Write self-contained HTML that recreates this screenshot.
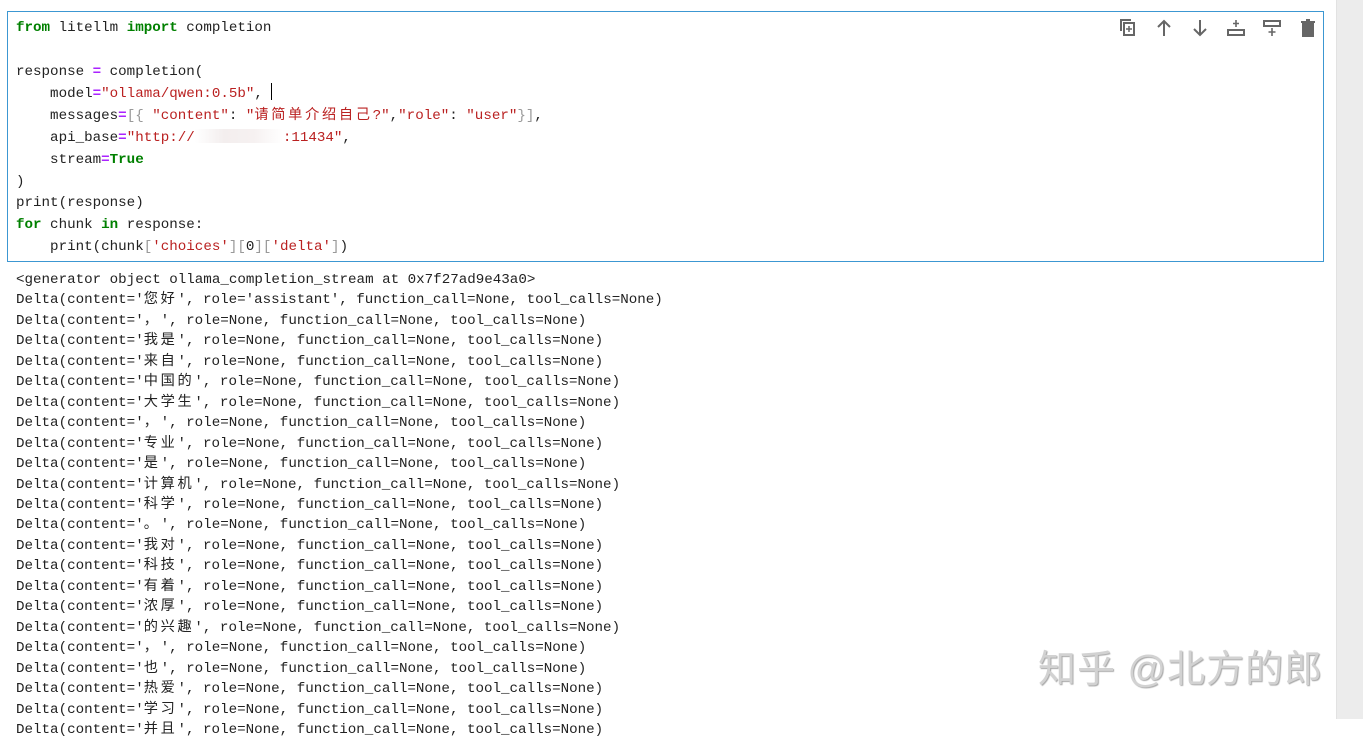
<!DOCTYPE html>
<html><head><meta charset="utf-8"><style>
body{margin:0;width:1363px;height:719px;overflow:hidden;background:#fff;position:relative;font-family:"Liberation Mono","Noto Sans CJK SC",monospace;}
.sb{position:absolute;left:1336px;top:0;width:27px;height:719px;background:#ececec;border-left:1px solid #e2e2e2}
.cell{position:absolute;left:7px;top:11px;width:1315px;height:249px;border:1px solid #3c97d2;}
.code{position:absolute;left:16px;top:18px;font-size:14.2px;line-height:21.8px;color:#222;white-space:pre;}
.k{color:#008000;font-weight:bold}.s{color:#ba2121}.o{color:#aa22ff;font-weight:bold}.b{color:#999}
.out{position:absolute;left:16px;top:270px;font-size:14.2px;line-height:20.45px;color:#222;white-space:pre;}
.c{letter-spacing:2.7px}
.cur{display:inline-block;width:1px;height:17px;background:#000;vertical-align:-3px}
.blur{display:inline-block;width:88px;height:14px;background:linear-gradient(90deg,#fff,#f3eeee,#f6f1f1,#fff);vertical-align:-2px}
.ic{position:absolute;top:18px}
.wm{position:absolute;left:1038px;top:638px;font-family:"Liberation Sans","Noto Sans CJK SC",sans-serif;font-size:38px;font-weight:normal;color:#d2d2d2;text-shadow:1px 1px 1px #a8a8a8;letter-spacing:1px}
</style></head><body>
<div class="sb"></div>
<div class="cell"></div>
<div class="code"><span class="k">from</span> litellm <span class="k">import</span> completion

response <span class="o">=</span> completion(
    model<span class="o">=</span><span class="s">"ollama/qwen:0.5b"</span>, <span class="cur"></span>
    messages<span class="o">=</span><span class="b">[{</span> <span class="s">"content"</span>: <span class="s">"<span class="c">请简单介绍自己</span>?"</span>,<span class="s">"role"</span>: <span class="s">"user"</span><span class="b">}]</span>,
    api_base<span class="o">=</span><span class="s">"http://<span class="blur"></span>:11434"</span>,
    stream<span class="o">=</span><span class="k">True</span>
)
print(response)
<span class="k">for</span> chunk <span class="k">in</span> response:
    print(chunk<span class="b">[</span><span class="s">'choices'</span><span class="b">][</span>0<span class="b">][</span><span class="s">'delta'</span><span class="b">]</span>)</div>
<svg class="ic" width="220" height="20" style="left:1118px" viewBox="0 0 220 20" fill="none" stroke="#666" stroke-width="2">
<rect x="6" y="5" width="10" height="12"/><path d="M3 13V2h10"/><path d="M11 8v6M8 11h6" stroke-width="1.5"/>
<path d="M46 18V3M40 9l6-6 6 6"/>
<path d="M82 2v15M76 11l6 6 6-6"/>
<path d="M110 12h16v5h-16z"/><path d="M118 2v7M115 5.5h6" stroke-width="1.6"/>
<path d="M146 3h16v5h-16z"/><path d="M154 10v8M150.5 14h7" stroke-width="1.6"/>
<path d="M185 6h10v12h-10z" fill="#666"/><path d="M183 4h14M188 2h4"/>
</svg>
<div class="out">&lt;generator object ollama_completion_stream at 0x7f27ad9e43a0&gt;
Delta(content='<span class="c">您好</span>', role='assistant', function_call=None, tool_calls=None)
Delta(content='<span class="c">，</span>', role=None, function_call=None, tool_calls=None)
Delta(content='<span class="c">我是</span>', role=None, function_call=None, tool_calls=None)
Delta(content='<span class="c">来自</span>', role=None, function_call=None, tool_calls=None)
Delta(content='<span class="c">中国的</span>', role=None, function_call=None, tool_calls=None)
Delta(content='<span class="c">大学生</span>', role=None, function_call=None, tool_calls=None)
Delta(content='<span class="c">，</span>', role=None, function_call=None, tool_calls=None)
Delta(content='<span class="c">专业</span>', role=None, function_call=None, tool_calls=None)
Delta(content='<span class="c">是</span>', role=None, function_call=None, tool_calls=None)
Delta(content='<span class="c">计算机</span>', role=None, function_call=None, tool_calls=None)
Delta(content='<span class="c">科学</span>', role=None, function_call=None, tool_calls=None)
Delta(content='<span class="c">。</span>', role=None, function_call=None, tool_calls=None)
Delta(content='<span class="c">我对</span>', role=None, function_call=None, tool_calls=None)
Delta(content='<span class="c">科技</span>', role=None, function_call=None, tool_calls=None)
Delta(content='<span class="c">有着</span>', role=None, function_call=None, tool_calls=None)
Delta(content='<span class="c">浓厚</span>', role=None, function_call=None, tool_calls=None)
Delta(content='<span class="c">的兴趣</span>', role=None, function_call=None, tool_calls=None)
Delta(content='<span class="c">，</span>', role=None, function_call=None, tool_calls=None)
Delta(content='<span class="c">也</span>', role=None, function_call=None, tool_calls=None)
Delta(content='<span class="c">热爱</span>', role=None, function_call=None, tool_calls=None)
Delta(content='<span class="c">学习</span>', role=None, function_call=None, tool_calls=None)
Delta(content='<span class="c">并且</span>', role=None, function_call=None, tool_calls=None)</div>
<div class="wm">知乎 @北方的郎</div>
</body></html>
